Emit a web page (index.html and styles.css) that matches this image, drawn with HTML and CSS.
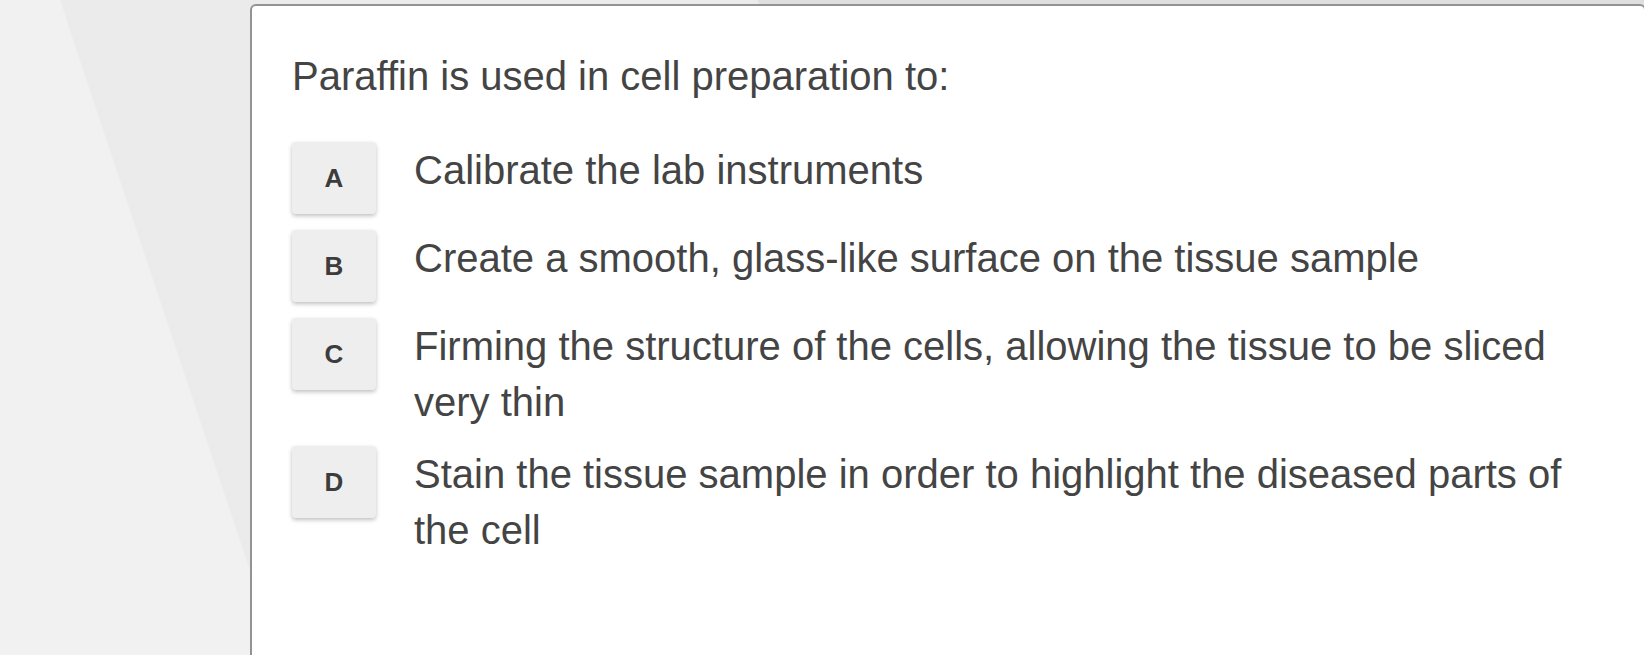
FILE: index.html
```html
<!DOCTYPE html>
<html lang="en">
<head>
<meta charset="utf-8">
<title>Quiz question</title>
<link rel="stylesheet" href="styles.css">
</head>
<body>
<main class="card">
  <p class="question">Paraffin is used in cell preparation to:</p>
  <ol class="options">
    <li class="option"><span class="key">A</span><span class="answer">Calibrate the lab instruments</span></li>
    <li class="option"><span class="key">B</span><span class="answer">Create a smooth, glass-like surface on the tissue sample</span></li>
    <li class="option"><span class="key">C</span><span class="answer">Firming the structure of the cells, allowing the tissue to be sliced very thin</span></li>
    <li class="option"><span class="key">D</span><span class="answer">Stain the tissue sample in order to highlight the diseased parts of the cell</span></li>
  </ol>
</main>
</body>
</html>
```
FILE: styles.css
```css
html, body {
  margin: 0;
  padding: 0;
}
body {
  height: 655px;
  overflow: hidden;
  font-family: "Liberation Sans", Arial, sans-serif;
  color: #444444;
  background: linear-gradient(71.57deg, #f1f1f1 0, #f1f1f1 264px, #ebebeb 264px, #ebebeb 926px, #dfdfdf 926px);
}
.card {
  box-sizing: border-box;
  margin: 4px 0 0 250px;
  width: 1396px;
  height: 651px;
  background: #ffffff;
  border: 2px solid #939393;
  border-bottom: none;
  border-radius: 6px 6px 0 0;
  padding: 42px 50px 0 40px;
}
.question {
  margin: 0 0 38px 0;
  font-size: 40px;
  line-height: 56px;
}
.options {
  list-style: none;
  margin: 0;
  padding: 0;
  display: flex;
  flex-direction: column;
  gap: 16px;
}
.option {
  display: flex;
  align-items: flex-start;
  gap: 38px;
}
.key {
  flex: 0 0 auto;
  width: 84px;
  height: 72px;
  display: flex;
  align-items: center;
  justify-content: center;
  background: #eeeeee;
  border-radius: 4px;
  box-shadow: 0 2px 4px rgba(0, 0, 0, 0.25);
  font-weight: bold;
  font-size: 26px;
  color: #3c3c3c;
}
.answer {
  font-size: 40px;
  line-height: 56px;
}
```
